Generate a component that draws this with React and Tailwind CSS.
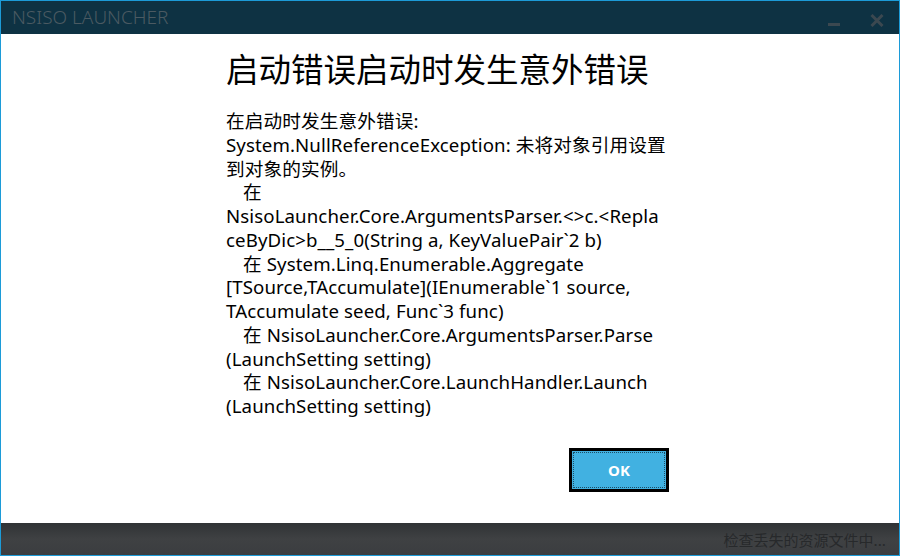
import React from 'react';

const lines = [
    { text: '在启动时发生意外错误:' },
    { text: 'System.NullReferenceException: 未将对象引用设置' },
    { text: '到对象的实例。' },
    { text: '在', indent: true },
    { text: 'NsisoLauncher.Core.ArgumentsParser.<>c.<Repla' },
    { text: 'ceByDic>b__5_0(String a, KeyValuePair`2 b)' },
    { text: '在 System.Linq.Enumerable.Aggregate', indent: true },
    { text: '[TSource,TAccumulate](IEnumerable`1 source,' },
    { text: 'TAccumulate seed, Func`3 func)' },
    { text: '在 NsisoLauncher.Core.ArgumentsParser.Parse', indent: true },
    { text: '(LaunchSetting setting)' },
    { text: '在 NsisoLauncher.Core.LaunchHandler.Launch', indent: true },
    { text: '(LaunchSetting setting)' },
];

export default function App() {
    return (
        <div className="w-[900px] h-[556px] flex flex-col border border-[#1c9bd8] bg-white font-['Noto_Sans','Noto_Sans_CJK_SC',sans-serif] overflow-hidden">
            {/* title bar */}
            <div className="h-[33px] shrink-0 bg-[#0e3243] flex items-start">
                <span className="pl-[11px] pt-[7px] text-[19px] font-light text-[#4b5a62] leading-none">
                    NSISO LAUNCHER
                </span>
                <div className="ml-auto flex items-start">
                    <svg width="12" height="3" viewBox="0 0 12 3" className="mr-[30px] mt-[22px]">
                        <rect x="0" y="0" width="12" height="3" fill="#3b4850" />
                    </svg>
                    <svg width="14" height="13" viewBox="0 0 14 13" className="mr-[15px] mt-[13px]">
                        <path d="M1.5 1 L12.5 12 M12.5 1 L1.5 12" stroke="#3b4850" strokeWidth="3" />
                    </svg>
                </div>
            </div>

            {/* content */}
            <div className="flex-1 bg-white pl-[225px]">
                <h1 className="mt-[13px] text-[32.5px] leading-[42px] text-black font-['Noto_Sans_CJK_SC',sans-serif]">
                    启动错误启动时发生意外错误
                </h1>
                <div className="mt-[20px] text-[18.67px] leading-[23.75px] tracking-[0.1px] text-black">
                    {lines.map((l, i) => (
                        <div key={i} className={`whitespace-nowrap ${l.indent ? 'pl-[17px]' : ''}`}>
                            {l.text}
                        </div>
                    ))}
                </div>
                <button className="mt-[30px] ml-[343px] w-[100px] h-[44px] border-[3px] border-black bg-[#41b1e1] p-[1px]">
                    <div className="w-full h-full border border-dotted border-[#1d4e66] flex items-center justify-center text-white text-[15px] font-bold">
                        OK
                    </div>
                </button>
            </div>

            {/* status bar */}
            <div className="h-[32px] shrink-0 bg-gradient-to-b from-[#303335] via-[#3f4143] to-[#3b3d40] flex items-center justify-end pr-[13px]">
                <span className="text-[15px] text-[#27292b] font-['Noto_Sans_CJK_SC',sans-serif] leading-none">
                    检查丢失的资源文件中...
                </span>
            </div>
        </div>
    );
}
